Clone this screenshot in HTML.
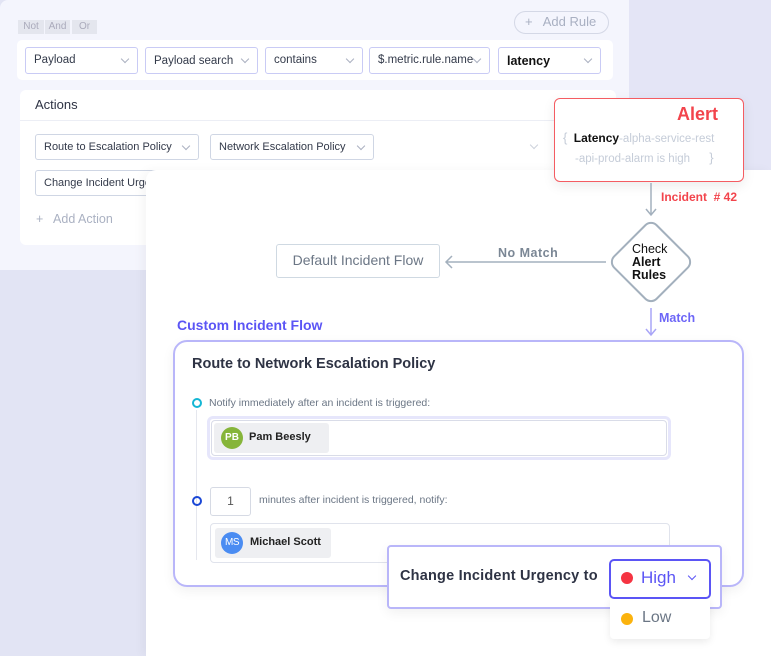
<!DOCTYPE html>
<html><head><style>
*{box-sizing:border-box;margin:0;padding:0}
body{width:771px;height:656px;position:relative;overflow:hidden;background:#fff;font-family:"Liberation Sans",sans-serif}
.a{position:absolute;white-space:nowrap}
.sel{position:absolute;height:27px;border:1.5px solid #c9cbf5;border-radius:3px;background:#fff;font-size:11.5px;color:#333a4a;padding:6px 8px;white-space:nowrap;overflow:hidden}
.sel:after{content:"";position:absolute;right:9px;top:8px;width:5px;height:5px;border-right:1px solid #aab0c0;border-bottom:1px solid #aab0c0;transform:rotate(45deg)}
.sel2{border:1.5px solid #cfd6e4}
</style></head><body>
<div class="a" style="left:0;top:0;width:771px;height:656px;background:#e2e4f4"></div>
<div class="a" style="left:0;top:0;width:629px;height:270px;background:#f4f5fd;border-radius:8px 0 0 0"></div>
<div class="a" style="left:629px;top:0;width:142px;height:170px;background:#e4e5f6"></div>
<div class="a" style="left:18px;top:20px;width:26px;height:14px;background:#e4e6ee;font-size:10px;color:#aab;text-align:center;line-height:14px">Not</div>
<div class="a" style="left:45px;top:20px;width:25px;height:14px;background:#e4e6ee;font-size:10px;color:#aab;text-align:center;line-height:14px">And</div>
<div class="a" style="left:72px;top:20px;width:25px;height:14px;background:#e4e6ee;font-size:10px;color:#aab;text-align:center;line-height:14px">Or</div>
<div class="a" style="left:514px;top:11px;width:95px;height:23px;border:1.5px solid #d4d8e6;border-radius:12px;font-size:13px;color:#a9b0c2;line-height:20px;padding-left:10px">+&nbsp;&nbsp; Add Rule</div>
<div class="a" style="left:17px;top:40px;height:40px;background:#fff;border-radius:5px;width:596px"></div>
<div class="sel" style="left:25px;top:47px;width:113px">Payload</div>
<div class="sel" style="left:145px;top:47px;width:113px;padding-top:7px">Payload search</div>
<div class="sel" style="left:265px;top:47px;width:98px">contains</div>
<div class="sel" style="left:369px;top:47px;width:121px;padding-right:20px">$.metric.rule.name</div>
<div class="sel" style="left:498px;top:47px;width:103px;font-weight:bold;font-size:12.5px;color:#111">latency</div>
<div class="a" style="left:20px;top:90px;width:596px;height:155px;background:#fff;border-radius:6px"></div>
<div class="a" style="left:20px;top:120px;width:596px;height:1px;background:#eceef5"></div>
<div class="a" style="left:35px;top:97px;font-size:13px;color:#2e3344">Actions</div>
<div class="sel sel2" style="left:35px;top:134px;width:164px;height:26px;font-size:11px">Route to Escalation Policy</div>
<div class="sel sel2" style="left:210px;top:134px;width:164px;height:26px;font-size:11px">Network Escalation Policy</div>
<div class="a" style="left:531px;top:142px;width:6px;height:6px;border-right:1px solid #cdd2dc;border-bottom:1px solid #cdd2dc;transform:rotate(45deg)"></div>
<div class="sel sel2" style="left:35px;top:170px;width:164px;height:26px;font-size:11px">Change Incident Urgency</div>
<div class="a" style="left:36px;top:212px;font-size:12.5px;color:#aab1c2">+&nbsp;&nbsp; Add Action</div>
<div class="a" style="left:146px;top:170px;width:625px;height:486px;background:#fff;border-radius:10px 0 0 0;box-shadow:-4px 0 10px rgba(0,0,0,.04)"></div>
<!-- Alert -->
<div class="a" style="left:554px;top:98px;width:190px;height:84px;background:#fff;border:1.5px solid #f45c62;border-radius:6px;box-shadow:0 4px 12px rgba(0,0,0,.08)"></div>
<div class="a" style="left:677px;top:104px;font-size:18px;font-weight:bold;color:#f2444c">Alert</div>
<div class="a" style="left:563px;top:130px;font-size:11.5px;color:#c5ccd8"><span style="font-size:13px">{</span>&nbsp; <b style="color:#111;font-size:12px">Latency</b>-alpha-service-rest</div>
<div class="a" style="left:575px;top:150px;font-size:11.5px;color:#c5ccd8">-api-prod-alarm is high &nbsp;&nbsp;&nbsp;&nbsp; <span style="font-size:13px">}</span></div>
<svg class="a" style="left:0;top:0" width="771" height="656">
<path d="M651 183V214M646 209L651 215L656 209" stroke="#a3b0bd" stroke-width="1.5" fill="none"/>
<rect x="621" y="232" width="60" height="60" rx="8" transform="rotate(45 651 262)" fill="#fff" stroke="#a3b0bd" stroke-width="2"/>
<path d="M606 262H446M452 256L446 262L452 268" stroke="#a3b0bd" stroke-width="1.5" fill="none"/>
<path d="M651 308V334M646 329L651 335L656 329" stroke="#a9a5f7" stroke-width="1.5" fill="none"/>
</svg>
<div class="a" style="left:661px;top:190px;font-size:12px;font-weight:bold;color:#f2444c">Incident &nbsp;# 42</div>
<div class="a" style="left:632px;top:243px;font-size:12.5px;color:#111;line-height:13px">Check<br><b>Alert<br>Rules</b></div>
<div class="a" style="left:498px;top:246px;font-size:12.5px;font-weight:bold;color:#7b8795;letter-spacing:.5px">No Match</div>
<div class="a" style="left:659px;top:311px;font-size:12.5px;font-weight:bold;color:#6d66f7">Match</div>
<div class="a" style="left:276px;top:244px;width:164px;height:34px;border:1.5px solid #cfd9e2;border-radius:3px;font-size:14px;color:#6b7685;line-height:31px;text-align:center">Default Incident Flow</div>
<div class="a" style="left:177px;top:317px;font-size:14px;font-weight:bold;color:#5b55f5">Custom Incident Flow</div>
<div class="a" style="left:173px;top:340px;width:571px;height:247px;border:2px solid #b9b6f9;border-radius:14px;box-shadow:0 4px 12px rgba(0,0,0,.06)"></div>
<div class="a" style="left:192px;top:356px;font-size:14.5px;font-weight:bold;color:#2e3344">Route to Network Escalation Policy</div>
<div class="a" style="left:192px;top:398px;width:10px;height:10px;border:2px solid #14b6d4;border-radius:50%"></div>
<div class="a" style="left:196px;top:410px;width:1px;height:150px;background:#e5e7ee"></div>
<div class="a" style="left:209px;top:397px;font-size:10.5px;color:#6b7685">Notify immediately after an incident is triggered:</div>
<div class="a" style="left:207px;top:416px;width:464px;height:44px;border:3px solid #e6e6fb;border-radius:6px;background:#fff"></div>
<div class="a" style="left:211px;top:420px;width:456px;height:36px;border:1px solid #d9dce8;border-radius:4px"></div>
<div class="a" style="left:214px;top:423px;width:115px;height:30px;background:#eeeff2;border-radius:3px"></div>
<div class="a" style="left:221px;top:427px;width:22px;height:22px;border-radius:50%;background:#86b53a;color:#fff;font-size:10px;line-height:22px;text-align:center;font-weight:bold">PB</div>
<div class="a" style="left:249px;top:431px;font-size:11px;font-weight:bold;color:#222">Pam Beesly</div>
<div class="a" style="left:192px;top:496px;width:10px;height:10px;border:2px solid #1a47d6;border-radius:50%"></div>
<div class="a" style="left:210px;top:487px;width:41px;height:29px;border:1px solid #d6dae4;border-radius:3px;font-size:12px;color:#555;text-align:center;line-height:27px">1</div>
<div class="a" style="left:259px;top:494px;font-size:10.5px;color:#6b7685">minutes after incident is triggered, notify:</div>
<div class="a" style="left:210px;top:523px;width:460px;height:40px;border:1px solid #e0e3ec;border-radius:4px"></div>
<div class="a" style="left:215px;top:528px;width:116px;height:30px;background:#eeeff2;border-radius:3px"></div>
<div class="a" style="left:221px;top:532px;width:22px;height:22px;border-radius:50%;background:#4a8cf2;color:#fff;font-size:10px;line-height:22px;text-align:center;letter-spacing:-.5px">MS</div>
<div class="a" style="left:250px;top:536px;font-size:11px;font-weight:bold;color:#222">Michael Scott</div>
<div class="a" style="left:387px;top:545px;width:335px;height:64px;background:#fff;border:2px solid #b9b6f9;border-radius:4px;box-shadow:0 4px 12px rgba(0,0,0,.06)"></div>
<div class="a" style="left:400px;top:568px;font-size:14.5px;font-weight:bold;color:#2e3344;letter-spacing:.2px">Change Incident Urgency to</div>
<div class="a" style="left:610px;top:597px;width:100px;height:42px;background:#fff;border-radius:4px;box-shadow:0 3px 8px rgba(0,0,0,.08)"></div>
<div class="a" style="left:621px;top:613px;width:12px;height:12px;border-radius:50%;background:#fbb30e"></div>
<div class="a" style="left:642px;top:609px;font-size:16px;color:#6b7685">Low</div>
<div class="a" style="left:609px;top:559px;width:102px;height:40px;border:2px solid #5b55f5;border-radius:5px;background:#fff"></div>
<div class="a" style="left:621px;top:572px;width:12px;height:12px;border-radius:50%;background:#f53442"></div>
<div class="a" style="left:641px;top:568px;font-size:17px;color:#5b55f5">High</div>
<div class="a" style="left:689px;top:573px;width:6px;height:6px;border-right:1.5px solid #5b55f5;border-bottom:1.5px solid #5b55f5;transform:rotate(45deg)"></div>
</body></html>
